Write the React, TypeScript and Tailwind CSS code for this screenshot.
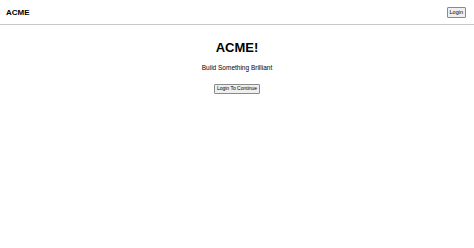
export default function App() {
  return (
    <div className="min-h-screen bg-white text-black" style={{ fontFamily: '"Liberation Sans", Arial, sans-serif' }}>
      {/* Header */}
      <header className="h-[25px] flex items-center justify-between px-[6px] border-b border-[#c8c8c8]">
        <span className="text-[8px] font-bold mt-[1px]">ACME</span>
        <button className="text-[5.5px] leading-none px-[2px] py-[1.5px] border border-[#8a8a8a] rounded-[1px] bg-[#efefef] mr-[2px] mt-[1px]">
          Login
        </button>
      </header>

      {/* Hero */}
      <main className="flex flex-col items-center pt-[16px]">
        <h1 className="text-[13px] font-bold leading-none">ACME!</h1>
        <p className="text-[6.5px] mt-[9px]">Build Something Brilliant</p>
        <button className="text-[5px] leading-none px-[2px] py-[1.5px] mt-[11px] border border-[#8a8a8a] rounded-[1px] bg-[#efefef]">
          Login To Continue
        </button>
      </main>
    </div>
  );
}
